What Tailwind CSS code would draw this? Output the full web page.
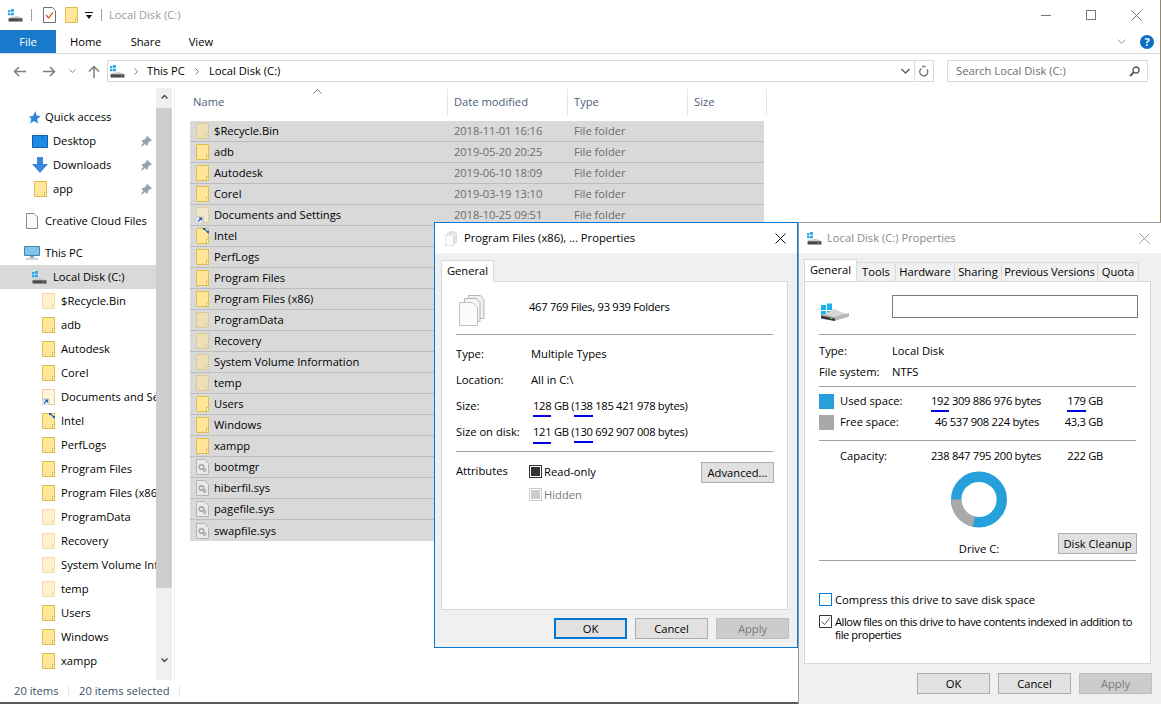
<!DOCTYPE html>
<html lang="en">
  <head>
    <meta charset="UTF-8" />
    <title>Local Disk (C:)</title>
    <script src="https://cdn.jsdelivr.net/npm/@tailwindcss/browser@4"></script>
  </head>
  <body class="bg-white">
    <!-- shared icons -->
    <svg class="hidden">
      <symbol id="folder" viewBox="0 0 13 16">
        <path d="M.5.5h12v15H.5z" fill="#ffe699" stroke="#e3bb4e" />
        <path d="M10.5 15.5v-4h2v4z" fill="#fff3c8" stroke="#e3bb4e" />
      </symbol>
      <symbol id="folder-link" viewBox="0 0 13 16">
        <path d="M.5.5h12v15H.5z" fill="#fff0c4" fill-opacity=".6" stroke="#e3cf98" />
        <path d="M0 10h7v6H0z" fill="#f4f4f4" stroke="#9aa5b5" stroke-width=".6" />
        <path d="M2 14.500l3-3M3 11h2.500v2.500" fill="none" stroke="#1f5fae" stroke-width="1.100" />
      </symbol>
      <symbol id="folder-intel" viewBox="0 0 13 16">
        <path d="M.5.5h12v15H.5z" fill="#ffe699" stroke="#e3bb4e" />
        <path d="M10.5 15.5v-4h2v4z" fill="#fff3c8" stroke="#e3bb4e" />
        <path d="M7 0l6 5" stroke="#2f7fd6" stroke-width="1.600" />
        <path d="M7 0h2v2H7zM11 3h2v2h-2z" fill="#1a5fb0" />
      </symbol>
      <symbol id="drive" viewBox="0 0 16 14">
        <path d="M0 1h2.500v2.500H0zM3.200 0h3v3h-3zM0 4.200h2.500v2.500H0zM3.200 4h3v2.700h-3z" fill="#1fa5e8" />
        <path d="M2 8.500l7-1 5 1.500 1.500 1.500H.5z" fill="#c9c9c9" />
        <path d="M.5 10h15v3.500H.5z" fill="#4a4a4a" />
        <path d="M11.500 11h1.500v1.200h-1.500z" fill="#53d653" />
      </symbol>
      <symbol id="pin" viewBox="0 0 12 12">
        <path d="M7 0l5 5-1.200.8-.8-.3-2.500 2.500-.2 2-1 .8-2-2L1 11.500 0 11l2.700-3.600-2-2 .8-1 2-.2L6 1.700l-.2-.8z" fill="#98a0a8" />
      </symbol>
      <symbol id="sysfile" viewBox="0 0 13 16">
        <path d="M.5.5h8l4 4v11H.5z" fill="#e9e9e9" stroke="#b4b4b4" />
        <circle cx="5.500" cy="8" r="2.300" fill="none" stroke="#a2a6aa" stroke-width="1.500" />
        <circle cx="8.500" cy="11" r="1.400" fill="none" stroke="#a2a6aa" stroke-width="1.100" />
      </symbol>
      <symbol id="copies" viewBox="0 0 26 32">
        <path d="M9.500 1.500h12l3.500 4v19H9.500z" fill="#f0f0f0" stroke="#b5b5b5" />
        <path d="M5.500 4.500h12l3.500 4v19H5.500z" fill="#f5f5f5" stroke="#b5b5b5" />
        <path d="M.5 8.500h13l5 5v18H.5z" fill="#fbfbfb" stroke="#c0c0c0" />
      </symbol>
      <symbol id="close" viewBox="0 0 11 11">
        <path d="M.5.500l10 10M10.500.500l-10 10" fill="none" stroke="currentColor" />
      </symbol>
    </svg>

    <div class="relative w-[1161px] h-[704px] overflow-hidden text-[11.2px] leading-none text-black font-['Open_Sans',sans-serif]">
      <!-- Explorer window -->
      <div class="flex flex-col h-[702px] border-r border-[#8f8674]">
        <!-- Title bar -->
        <div class="flex items-center h-[30px] shrink-0">
          <svg class="w-[15px] h-[13px] ml-2"><use href="#drive" /></svg>
          <div class="w-px h-[12px] bg-[#a0a0a0] ml-2"></div>
          <svg class="w-[13px] h-[16px] ml-[11px]" viewBox="0 0 13 16">
            <path d="M.5.500h9l3 3v12H.5z" fill="#fff" stroke="#707070" />
            <path d="M3 8l2.500 3L10 5.500" fill="none" stroke="#e2562a" stroke-width="1.300" />
          </svg>
          <svg class="w-[13px] h-[16px] ml-[9px]"><use href="#folder" /></svg>
          <svg class="w-2 h-[7px] ml-[7px]" viewBox="0 0 8 7"><path d="M0 0h8v1H0zM1 3h6L4 7z" fill="#111" /></svg>
          <div class="w-px h-[12px] bg-[#a0a0a0] ml-2"></div>
          <span class="ml-[7px] text-[#9a9a9a]">Local Disk (C:)</span>
          <div class="flex items-center ml-auto mr-[18px] gap-[35px]">
            <div class="w-[10px] h-px bg-[#777]"></div>
            <div class="w-[10px] h-[10px] border border-[#777]"></div>
            <svg class="w-[11px] h-[11px] text-[#777]"><use href="#close" /></svg>
          </div>
        </div>
        <!-- Ribbon tabs -->
        <div class="flex items-center h-[24px] shrink-0 border-b border-[#dadbdc]">
          <div class="flex items-center justify-center w-[56px] h-[23px] bg-[#1979ca] text-white">File</div>
          <span class="ml-[14px]">Home</span>
          <span class="ml-[29px]">Share</span>
          <span class="ml-[28px]">View</span>
          <svg class="w-[9px] h-[5px] ml-auto" viewBox="0 0 9 5"><path d="M.5.500l4 4 4-4" fill="none" stroke="#999" /></svg>
          <div class="flex items-center justify-center w-[14px] h-[14px] rounded-full bg-[#0a6fc2] text-white text-[11px] font-bold ml-[14px] mr-[6px]">?</div>
        </div>
        <!-- Address row -->
        <div class="flex items-center h-[34px] shrink-0">
          <svg class="w-[13px] h-[11px] ml-[13px]" viewBox="0 0 13 11"><path d="M13 5.500H1.500M6 1L1.500 5.500 6 10" fill="none" stroke="#7d7d7d" stroke-width="1.500" /></svg>
          <svg class="w-[13px] h-[11px] ml-[17px]" viewBox="0 0 13 11"><path d="M0 5.500h11.500M7 1l4.500 4.500L7 10" fill="none" stroke="#7d7d7d" stroke-width="1.500" /></svg>
          <svg class="w-[7px] h-[4px] ml-[13px]" viewBox="0 0 7 4"><path d="M.5.500l3 3 3-3" fill="none" stroke="#888" /></svg>
          <svg class="w-[12px] h-[13px] ml-[12px]" viewBox="0 0 12 13"><path d="M6 13V2M1 6.500L6 1.500l5 5" fill="none" stroke="#7d7d7d" stroke-width="1.500" /></svg>
          <div class="flex items-center w-[827px] h-[22px] ml-[7px] border border-[#d9d9d9]">
            <svg class="w-[15px] h-[13px] ml-[2px]"><use href="#drive" /></svg>
            <svg class="w-[4px] h-[7px] ml-[9px]" viewBox="0 0 4 7"><path d="M.5.500l3 3-3 3" fill="none" stroke="#777" /></svg>
            <span class="ml-[9px]">This PC</span>
            <svg class="w-[4px] h-[7px] ml-[10px]" viewBox="0 0 4 7"><path d="M.5.500l3 3-3 3" fill="none" stroke="#777" /></svg>
            <span class="ml-[10px]">Local Disk (C:)</span>
            <svg class="w-[9px] h-[6px] ml-auto" viewBox="0 0 9 6"><path d="M.5 1l4 4 4-4" fill="none" stroke="#555" stroke-width="1.300" /></svg>
            <div class="w-px h-full bg-[#d9d9d9] ml-[4px]"></div>
            <svg class="w-[10px] h-[12px] ml-[4px] mr-[4px]" viewBox="0 0 10 12"><path d="M3 1.500h3.500M8 4.500a4 4 0 1 1-5.500-1" fill="none" stroke="#777" stroke-width="1.400" /></svg>
          </div>
          <div class="flex items-center w-[201px] h-[22px] ml-[13px] border border-[#d9d9d9] text-[#6d6d6d]">
            <span class="ml-2">Search Local Disk (C:)</span>
            <svg class="w-[11px] h-[11px] ml-auto mr-[7px]" viewBox="0 0 11 11"><circle cx="7" cy="4" r="3" fill="none" stroke="#555" stroke-width="1.300" /><path d="M5 6L1 10" stroke="#555" stroke-width="1.800" /></svg>
          </div>
        </div>
        <!-- Body -->
        <div class="flex flex-1 min-h-0">
          <!-- Navigation tree -->
          <div class="w-[156px] shrink-0 overflow-hidden whitespace-nowrap pt-[17px]">
            <div class="flex items-center h-6">
              <svg class="w-[14px] h-[13px] ml-[27px]" viewBox="0 0 14 13"><path d="M8.500 0l1 4.500 4 .8-3.300 2.700.8 4.500-4-2.400L3 12.500l1.300-4.500L2 5.500l4-.5z" fill="#2f86d6" /></svg>
              <span class="ml-[4px]">Quick access</span>
            </div>
            <div class="flex items-center h-6">
              <svg class="w-[16px] h-[13px] ml-[32px]" viewBox="0 0 16 13"><path d="M.5.500h15v12H.5z" fill="#1e8ae6" stroke="#0b5fae" /><path d="M10 1l1 3" stroke="#0b5fae" /></svg>
              <span class="ml-[5px]">Desktop</span>
              <svg class="w-[11px] h-[11px] ml-auto mr-[4px]"><use href="#pin" /></svg>
            </div>
            <div class="flex items-center h-6">
              <svg class="w-[16px] h-[16px] ml-[32px]" viewBox="0 0 16 16"><path d="M5 0h6v7h5l-8 9-8-9h5z" fill="#3c87d8" /></svg>
              <span class="ml-[5px]">Downloads</span>
              <svg class="w-[11px] h-[11px] ml-auto mr-[4px]"><use href="#pin" /></svg>
            </div>
            <div class="flex items-center h-6">
              <svg class="w-[13px] h-[16px] ml-[34px]"><use href="#folder" /></svg>
              <span class="ml-[6px]">app</span>
              <svg class="w-[11px] h-[11px] ml-auto mr-[4px]"><use href="#pin" /></svg>
            </div>
            <div class="flex items-center h-6 mt-2">
              <svg class="w-[12px] h-[16px] ml-[26px]" viewBox="0 0 12 16"><path d="M.5.500h7.500l3.500 3.500v11.500H.5z" fill="#fafafa" stroke="#8a8a8a" /></svg>
              <span class="ml-[7px]">Creative Cloud Files</span>
            </div>
            <div class="flex items-center h-6 mt-2">
              <svg class="w-[16px] h-[14px] ml-[24px]" viewBox="0 0 16 14"><path d="M.5.500h15v9H.5z" fill="#7cc4ee" stroke="#4a7ea6" /><path d="M6 10h4v2H6zM2 12.500h12v1H2z" fill="#8fa8bc" /></svg>
              <span class="ml-[5px]">This PC</span>
            </div>
            <div class="flex items-center h-6 bg-[#d9d9d9]">
              <svg class="w-[15px] h-[13px] ml-[32px]"><use href="#drive" /></svg>
              <span class="ml-[6px]">Local Disk (C:)</span>
            </div>
            <div class="flex items-center h-6"><svg class="w-[13px] h-[16px] shrink-0 ml-[42px] opacity-50"><use href="#folder" /></svg><span class="ml-[6px]">$Recycle.Bin</span></div>
            <div class="flex items-center h-6"><svg class="w-[13px] h-[16px] shrink-0 ml-[42px]"><use href="#folder" /></svg><span class="ml-[6px]">adb</span></div>
            <div class="flex items-center h-6"><svg class="w-[13px] h-[16px] shrink-0 ml-[42px]"><use href="#folder" /></svg><span class="ml-[6px]">Autodesk</span></div>
            <div class="flex items-center h-6"><svg class="w-[13px] h-[16px] shrink-0 ml-[42px]"><use href="#folder" /></svg><span class="ml-[6px]">Corel</span></div>
            <div class="flex items-center h-6"><svg class="w-[13px] h-[16px] shrink-0 ml-[42px]"><use href="#folder-link" /></svg><span class="ml-[6px]">Documents and Settings</span></div>
            <div class="flex items-center h-6"><svg class="w-[13px] h-[16px] shrink-0 ml-[42px]"><use href="#folder-intel" /></svg><span class="ml-[6px]">Intel</span></div>
            <div class="flex items-center h-6"><svg class="w-[13px] h-[16px] shrink-0 ml-[42px]"><use href="#folder" /></svg><span class="ml-[6px]">PerfLogs</span></div>
            <div class="flex items-center h-6"><svg class="w-[13px] h-[16px] shrink-0 ml-[42px]"><use href="#folder" /></svg><span class="ml-[6px]">Program Files</span></div>
            <div class="flex items-center h-6"><svg class="w-[13px] h-[16px] shrink-0 ml-[42px]"><use href="#folder" /></svg><span class="ml-[6px]">Program Files (x86)</span></div>
            <div class="flex items-center h-6"><svg class="w-[13px] h-[16px] shrink-0 ml-[42px] opacity-50"><use href="#folder" /></svg><span class="ml-[6px]">ProgramData</span></div>
            <div class="flex items-center h-6"><svg class="w-[13px] h-[16px] shrink-0 ml-[42px] opacity-50"><use href="#folder" /></svg><span class="ml-[6px]">Recovery</span></div>
            <div class="flex items-center h-6"><svg class="w-[13px] h-[16px] shrink-0 ml-[42px] opacity-50"><use href="#folder" /></svg><span class="ml-[6px]">System Volume Information</span></div>
            <div class="flex items-center h-6"><svg class="w-[13px] h-[16px] shrink-0 ml-[42px] opacity-50"><use href="#folder" /></svg><span class="ml-[6px]">temp</span></div>
            <div class="flex items-center h-6"><svg class="w-[13px] h-[16px] shrink-0 ml-[42px]"><use href="#folder" /></svg><span class="ml-[6px]">Users</span></div>
            <div class="flex items-center h-6"><svg class="w-[13px] h-[16px] shrink-0 ml-[42px]"><use href="#folder" /></svg><span class="ml-[6px]">Windows</span></div>
            <div class="flex items-center h-6"><svg class="w-[13px] h-[16px] shrink-0 ml-[42px]"><use href="#folder" /></svg><span class="ml-[6px]">xampp</span></div>
          </div>
          <!-- Tree scrollbar -->
          <div class="flex flex-col items-center w-[16px] shrink-0 bg-[#f0f0f0] h-[592px]">
            <svg class="w-[7px] h-[5px] mt-[6px]" viewBox="0 0 7 5"><path d="M.5 4.500l3-3 3 3" fill="none" stroke="#444" stroke-width="1.400" /></svg>
            <div class="w-full h-[480px] mt-[9px] bg-[#cdcdcd]"></div>
            <svg class="w-[7px] h-[5px] mt-[70px]" viewBox="0 0 7 5"><path d="M.5.500l3 3 3-3" fill="none" stroke="#444" stroke-width="1.400" /></svg>
          </div>
          <div class="w-px h-[592px] ml-[2px] bg-[#f0f0f0]"></div>
          <!-- File list -->
          <div class="relative flex-1 whitespace-nowrap">
            <svg class="absolute left-[138px] top-[1px] w-[9px] h-[5px]" viewBox="0 0 9 5"><path d="M.5 4.500l4-4 4 4" fill="none" stroke="#777" /></svg>
            <div class="flex items-center h-[26px] mt-[1px] ml-[15px] text-[#4c607a]">
              <div class="w-[257px] pl-[3px]">Name</div>
              <div class="w-[120px] h-full flex items-center pl-[6px] border-l border-[#e5e5e5]">Date modified</div>
              <div class="w-[120px] h-full flex items-center pl-[6px] border-l border-[#e5e5e5]">Type</div>
              <div class="w-[80px] h-full flex items-center pl-[6px] border-x border-[#e5e5e5]">Size</div>
            </div>
            <div class="w-[574px] ml-[15px] mt-[6px] flex flex-col">
              <div class="flex items-center h-[21px] bg-[#d9d9d9] border-b border-[#bdbdbd]"><svg class="w-[13px] h-[16px] ml-[6px] opacity-50"><use href="#folder" /></svg><span class="ml-[5px] w-[240px]">$Recycle.Bin</span><span class="w-[120px] text-[#6d6d6d] tracking-[-0.1px]">2018-11-01 16:16</span><span class="text-[#6d6d6d]">File folder</span></div>
              <div class="flex items-center h-[21px] bg-[#d9d9d9] border-b border-[#bdbdbd]"><svg class="w-[13px] h-[16px] ml-[6px]"><use href="#folder" /></svg><span class="ml-[5px] w-[240px]">adb</span><span class="w-[120px] text-[#6d6d6d] tracking-[-0.1px]">2019-05-20 20:25</span><span class="text-[#6d6d6d]">File folder</span></div>
              <div class="flex items-center h-[21px] bg-[#d9d9d9] border-b border-[#bdbdbd]"><svg class="w-[13px] h-[16px] ml-[6px]"><use href="#folder" /></svg><span class="ml-[5px] w-[240px]">Autodesk</span><span class="w-[120px] text-[#6d6d6d] tracking-[-0.1px]">2019-06-10 18:09</span><span class="text-[#6d6d6d]">File folder</span></div>
              <div class="flex items-center h-[21px] bg-[#d9d9d9] border-b border-[#bdbdbd]"><svg class="w-[13px] h-[16px] ml-[6px]"><use href="#folder" /></svg><span class="ml-[5px] w-[240px]">Corel</span><span class="w-[120px] text-[#6d6d6d] tracking-[-0.1px]">2019-03-19 13:10</span><span class="text-[#6d6d6d]">File folder</span></div>
              <div class="flex items-center h-[21px] bg-[#d9d9d9] border-b border-[#bdbdbd]"><svg class="w-[13px] h-[16px] ml-[6px]"><use href="#folder-link" /></svg><span class="ml-[5px] w-[240px]">Documents and Settings</span><span class="w-[120px] text-[#6d6d6d] tracking-[-0.1px]">2018-10-25 09:51</span><span class="text-[#6d6d6d]">File folder</span></div>
              <div class="flex items-center h-[21px] bg-[#d9d9d9] border-b border-[#bdbdbd]"><svg class="w-[13px] h-[16px] ml-[6px]"><use href="#folder-intel" /></svg><span class="ml-[5px]">Intel</span></div>
              <div class="flex items-center h-[21px] bg-[#d9d9d9] border-b border-[#bdbdbd]"><svg class="w-[13px] h-[16px] ml-[6px]"><use href="#folder" /></svg><span class="ml-[5px]">PerfLogs</span></div>
              <div class="flex items-center h-[21px] bg-[#d9d9d9] border-b border-[#bdbdbd]"><svg class="w-[13px] h-[16px] ml-[6px]"><use href="#folder" /></svg><span class="ml-[5px]">Program Files</span></div>
              <div class="flex items-center h-[21px] bg-[#d9d9d9] border-b border-[#bdbdbd]"><svg class="w-[13px] h-[16px] ml-[6px]"><use href="#folder" /></svg><span class="ml-[5px]">Program Files (x86)</span></div>
              <div class="flex items-center h-[21px] bg-[#d9d9d9] border-b border-[#bdbdbd]"><svg class="w-[13px] h-[16px] ml-[6px] opacity-50"><use href="#folder" /></svg><span class="ml-[5px]">ProgramData</span></div>
              <div class="flex items-center h-[21px] bg-[#d9d9d9] border-b border-[#bdbdbd]"><svg class="w-[13px] h-[16px] ml-[6px] opacity-50"><use href="#folder" /></svg><span class="ml-[5px]">Recovery</span></div>
              <div class="flex items-center h-[21px] bg-[#d9d9d9] border-b border-[#bdbdbd]"><svg class="w-[13px] h-[16px] ml-[6px] opacity-50"><use href="#folder" /></svg><span class="ml-[5px]">System Volume Information</span></div>
              <div class="flex items-center h-[21px] bg-[#d9d9d9] border-b border-[#bdbdbd]"><svg class="w-[13px] h-[16px] ml-[6px] opacity-50"><use href="#folder" /></svg><span class="ml-[5px]">temp</span></div>
              <div class="flex items-center h-[21px] bg-[#d9d9d9] border-b border-[#bdbdbd]"><svg class="w-[13px] h-[16px] ml-[6px]"><use href="#folder" /></svg><span class="ml-[5px]">Users</span></div>
              <div class="flex items-center h-[21px] bg-[#d9d9d9] border-b border-[#bdbdbd]"><svg class="w-[13px] h-[16px] ml-[6px]"><use href="#folder" /></svg><span class="ml-[5px]">Windows</span></div>
              <div class="flex items-center h-[21px] bg-[#d9d9d9] border-b border-[#bdbdbd]"><svg class="w-[13px] h-[16px] ml-[6px]"><use href="#folder" /></svg><span class="ml-[5px]">xampp</span></div>
              <div class="flex items-center h-[21px] bg-[#d9d9d9] border-b border-[#bdbdbd]"><svg class="w-[13px] h-[16px] ml-[6px]"><use href="#sysfile" /></svg><span class="ml-[5px]">bootmgr</span></div>
              <div class="flex items-center h-[21px] bg-[#d9d9d9] border-b border-[#bdbdbd]"><svg class="w-[13px] h-[16px] ml-[6px]"><use href="#sysfile" /></svg><span class="ml-[5px]">hiberfil.sys</span></div>
              <div class="flex items-center h-[21px] bg-[#d9d9d9] border-b border-[#bdbdbd]"><svg class="w-[13px] h-[16px] ml-[6px]"><use href="#sysfile" /></svg><span class="ml-[5px]">pagefile.sys</span></div>
              <div class="flex items-center h-[21px] bg-[#d9d9d9]"><svg class="w-[13px] h-[16px] ml-[6px]"><use href="#sysfile" /></svg><span class="ml-[5px]">swapfile.sys</span></div>
            </div>
          </div>
        </div>
        <!-- Status bar -->
        <div class="flex items-center h-[22px] shrink-0 text-[#3b4f66]">
          <span class="ml-[14px] w-[54px]">20 items</span>
          <div class="w-px h-[11px] bg-[#e5e5e5]"></div>
          <span class="ml-[10px] w-[100px]">20 items selected</span>
          <div class="w-px h-[11px] bg-[#e5e5e5]"></div>
        </div>
      </div>
      <div class="h-[2px] bg-[#5a5a5a]"></div>

      <!-- Program Files (x86) properties dialog -->
      <div class="absolute left-[434px] top-[222px] w-[364px] h-[426px] flex flex-col bg-[#f0f0f0] border border-[#0078d7]">
        <div class="flex items-center h-[30px] shrink-0 bg-white">
          <svg class="w-[12px] h-[15px] ml-[10px]"><use href="#copies" /></svg>
          <span class="ml-[7px]">Program Files (x86), ... Properties</span>
          <svg class="w-[11px] h-[11px] ml-auto mr-[11px] text-[#111]"><use href="#close" /></svg>
        </div>
        <div class="flex h-[28px] pt-[7px] pl-[6px] shrink-0">
          <div class="relative z-10 flex items-center justify-center w-[53px] h-[22px] pb-[2px] bg-white border border-b-0 border-[#d9d9d9]">General</div>
        </div>
        <div class="flex flex-col w-[347px] h-[329px] ml-[6px] bg-white border border-[#d9d9d9] px-[14px]">
          <div class="flex items-center h-[53px] shrink-0 border-b border-[#a0a0a0]">
            <svg class="w-[26px] h-[32px] ml-[3px] mt-[3px]"><use href="#copies" /></svg>
            <span class="ml-[44px] -mt-[3px] tracking-[-0.3px]">467 769 Files, 93 939 Folders</span>
          </div>
          <div class="flex items-center h-[26px] mt-[6px]"><span class="w-[75px]">Type:</span><span>Multiple Types</span></div>
          <div class="flex items-center h-[26px]"><span class="w-[75px]">Location:</span><span>All in C:\</span></div>
          <div class="flex items-center h-[26px]"><span class="w-[75px]">Size:</span><span class="ml-[2px] tracking-[-0.3px]"><span class="relative">128<span class="absolute left-0 right-0 -bottom-[4px] h-[2px] bg-[#0000e0]"></span></span> GB (<span class="relative">138<span class="absolute left-0 right-0 -bottom-[4px] h-[2px] bg-[#0000e0]"></span></span> 185 421 978 bytes)</span></div>
          <div class="flex items-center h-[26px]"><span class="w-[75px]">Size on disk:</span><span class="ml-[2px] tracking-[-0.3px]"><span class="relative">121<span class="absolute left-0 right-0 -bottom-[5px] h-[2px] bg-[#0000e0]"></span></span> GB (<span class="relative">130<span class="absolute left-0 right-0 -bottom-[4px] h-[2px] bg-[#0000e0]"></span></span> 692 907 008 bytes)</span></div>
          <div class="h-px mt-[6px] bg-[#a0a0a0] shrink-0"></div>
          <div class="flex items-start mt-[10px]">
            <span class="w-[73px] mt-[3px]">Attributes</span>
            <div class="flex flex-col gap-[10px] mt-[3px]">
              <div class="flex items-center">
                <div class="flex items-center justify-center w-[13px] h-[13px] border border-[#333]"><div class="w-[9px] h-[9px] bg-[#333]"></div></div>
                <span class="ml-[2px]">Read-only</span>
              </div>
              <div class="flex items-center text-[#7a7a7a]">
                <div class="flex items-center justify-center w-[13px] h-[13px] border border-[#cccccc]"><div class="w-[9px] h-[9px] bg-[#cccccc]"></div></div>
                <span class="ml-[2px]">Hidden</span>
              </div>
            </div>
            <div class="flex items-center justify-center w-[73px] h-[21px] ml-auto -mr-[1px] bg-[#e1e1e1] border border-[#adadad]">Advanced...</div>
          </div>
        </div>
        <div class="flex justify-end gap-[8px] mt-[8px] mr-[8px]">
          <div class="flex items-center justify-center w-[73px] h-[21px] bg-[#e1e1e1] border-2 border-[#0078d7]">OK</div>
          <div class="flex items-center justify-center w-[73px] h-[21px] bg-[#e1e1e1] border border-[#adadad]">Cancel</div>
          <div class="flex items-center justify-center w-[73px] h-[21px] bg-[#cccccc] border border-[#bfbfbf] text-[#7a7a7a]">Apply</div>
        </div>
      </div>

      <!-- Local Disk properties dialog -->
      <div class="absolute left-[798px] top-[222px] w-[363px] h-[482px] flex flex-col bg-[#f0f0f0] border-l border-t border-[#9a9a9a]">
        <div class="flex items-center h-[30px] shrink-0 bg-white">
          <svg class="w-[15px] h-[13px] ml-[8px]"><use href="#drive" /></svg>
          <span class="ml-[5px] text-[#8a8a8a]">Local Disk (C:) Properties</span>
          <svg class="w-[11px] h-[11px] ml-auto mr-[11px] text-[#999]"><use href="#close" /></svg>
        </div>
        <div class="flex items-end h-[28px] pl-[5px] shrink-0">
          <div class="relative z-10 flex items-center justify-center w-[53px] h-[22px] pb-[2px] bg-white border border-b-0 border-[#d9d9d9]">General</div>
          <div class="flex items-center justify-center w-[39px] h-[19px] bg-[#f0f0f0] border border-l-0 border-b-0 border-[#d9d9d9]">Tools</div>
          <div class="flex items-center justify-center w-[59px] h-[19px] bg-[#f0f0f0] border border-l-0 border-b-0 border-[#d9d9d9]">Hardware</div>
          <div class="flex items-center justify-center w-[47px] h-[19px] bg-[#f0f0f0] border border-l-0 border-b-0 border-[#d9d9d9]">Sharing</div>
          <div class="flex items-center justify-center w-[96px] h-[19px] bg-[#f0f0f0] border border-l-0 border-b-0 border-[#d9d9d9] tracking-[-0.1px]">Previous Versions</div>
          <div class="flex items-center justify-center w-[41px] h-[19px] bg-[#f0f0f0] border border-l-0 border-b-0 border-[#d9d9d9]">Quota</div>
        </div>
        <div class="flex flex-col w-[347px] h-[383px] ml-[5px] bg-white border border-[#d9d9d9] px-[14px]">
          <div class="flex items-center h-[53px] shrink-0 border-b border-[#a0a0a0]">
            <svg class="w-[30px] h-[24px] shrink-0 ml-[1px] mt-[1px]" viewBox="0 0 30 24">
              <path d="M1 8h5v5H1zM7 6.500h5v6.500H7zM1 14h5v5H1zM7 14h5v5H7z" fill="#1bb3ee" />
              <path d="M1 19l13-7 15 6v2L14 24z" fill="#d6d6d6" />
              <path d="M1 18l3-1 10 3 15-4v3l-15 5L1 21z" fill="#b5b5b5" />
              <path d="M1 18.500l14 3v2.500L1 21.500z" fill="#3a3a3a" />
              <path d="M10 20.800h2v1.200h-2z" fill="#4fc26a" />
            </svg>
            <div class="w-[246px] h-[23px] shrink-0 ml-[42px] -mt-[4px] border border-[#7a7a7a]"></div>
          </div>
          <div class="flex items-center h-[21px] mt-[5px]"><span class="w-[73px]">Type:</span><span>Local Disk</span></div>
          <div class="flex items-center h-[21px]"><span class="w-[73px]">File system:</span><span>NTFS</span></div>
          <div class="h-px mt-[4px] bg-[#a0a0a0] shrink-0"></div>
          <div class="flex items-center h-[21px] mt-[3px] whitespace-nowrap">
            <div class="w-[15px] h-[15px] mt-[1px] bg-[#26a0da]"></div>
            <span class="ml-[6px] w-[91px]">Used space:</span>
            <span class="w-[108px] text-right tracking-[-0.3px]"><span class="relative">192<span class="absolute left-0 right-0 -bottom-[4px] h-[2px] bg-[#0000e0]"></span></span> 309 886 976 bytes</span>
            <span class="w-[64px] text-right tracking-[-0.3px]"><span class="relative">179<span class="absolute left-0 right-0 -bottom-[4px] h-[2px] bg-[#0000e0]"></span></span> GB</span>
          </div>
          <div class="flex items-center h-[21px] whitespace-nowrap">
            <div class="w-[15px] h-[15px] mt-[1px] bg-[#a9a9a9]"></div>
            <span class="ml-[6px] w-[91px]">Free space:</span>
            <span class="w-[108px] text-right tracking-[-0.3px]">46 537 908 224 bytes</span>
            <span class="w-[64px] text-right tracking-[-0.3px]">43,3 GB</span>
          </div>
          <div class="h-px mt-[8px] bg-[#a0a0a0] shrink-0"></div>
          <div class="flex items-center h-[15px] mt-[7px] whitespace-nowrap">
            <span class="ml-[21px] w-[91px]">Capacity:</span>
            <span class="w-[108px] text-right tracking-[-0.3px]">238 847 795 200 bytes</span>
            <span class="w-[64px] text-right tracking-[-0.3px]">222 GB</span>
          </div>
          <div class="flex items-end h-[97px] shrink-0">
            <div class="flex flex-col items-center w-[320px] shrink-0 self-start mt-[8px]">
              <svg class="w-[56px] h-[57px]" viewBox="-28 -28 56 56">
                <circle r="22.800" fill="none" stroke="#26a0da" stroke-width="10.400" />
                <path d="M-22.800 0A22.800 22.800 0 0 0-5.130 22.200" fill="none" stroke="#a9a9a9" stroke-width="10.400" />
              </svg>
              <span class="mt-[15px]">Drive C:</span>
            </div>
            <div class="flex items-center justify-center shrink-0 w-[79px] h-[21px] -ml-[81px] mb-[6px] bg-[#e1e1e1] border border-[#adadad]">Disk Cleanup</div>
          </div>
          <div class="h-px bg-[#a0a0a0] shrink-0"></div>
          <div class="flex items-center mt-[32px]">
            <div class="w-[13px] h-[13px] border border-[#0078d7]"></div>
            <span class="ml-[3px]">Compress this drive to save disk space</span>
          </div>
          <div class="flex items-start mt-[9px]">
            <svg class="w-[13px] h-[13px] shrink-0" viewBox="0 0 13 13"><path d="M.5.500h12v12H.5z" fill="#fff" stroke="#333" /><path d="M2.500 6.500l3 3 5-6" fill="none" stroke="#555" /></svg>
            <span class="ml-[3px] leading-[13px] tracking-[-0.45px] whitespace-nowrap">Allow files on this drive to have contents indexed in addition to<br />file properties</span>
          </div>
        </div>
        <div class="flex justify-end gap-[8px] mt-[9px] mr-[9px]">
          <div class="flex items-center justify-center w-[73px] h-[21px] bg-[#e1e1e1] border border-[#adadad]">OK</div>
          <div class="flex items-center justify-center w-[73px] h-[21px] bg-[#e1e1e1] border border-[#adadad]">Cancel</div>
          <div class="flex items-center justify-center w-[73px] h-[21px] bg-[#cccccc] border border-[#bfbfbf] text-[#7a7a7a]">Apply</div>
        </div>
      </div>
    </div>
  </body>
</html>
